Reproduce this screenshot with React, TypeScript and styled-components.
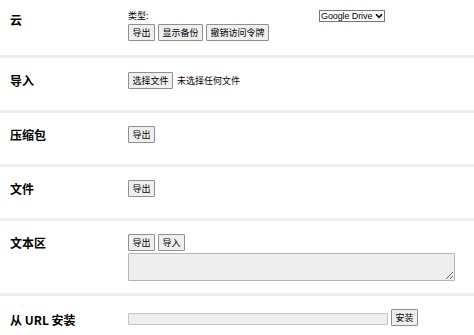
import styled, { createGlobalStyle } from 'styled-components';

const GlobalStyle = createGlobalStyle`
  html, body {
    margin: 0;
    padding: 0;
    background: #fff;
  }
  body {
    font-family: "Liberation Sans", "Noto Sans CJK SC", sans-serif;
    color: #000;
  }
`;

const Page = styled.div`
  width: 474px;
  display: flex;
  flex-direction: column;
`;

const Row = styled.section<{ $h?: number; $top?: number }>`
  display: grid;
  grid-template-columns: 118px 1fr;
  align-items: start;
  height: ${(p) => (p.$h ? `${p.$h}px` : 'auto')};
  padding: ${(p) => p.$top ?? 13}px 10px 0 10px;
  box-sizing: border-box;
  border-bottom: 3px solid #eeeeee;
  &:last-child {
    border-bottom: none;
  }
`;

const Label = styled.div<{ $offset?: number }>`
  font-family: "Noto Sans CJK SC", "Liberation Sans", sans-serif;
  font-weight: bold;
  font-size: 12px;
  line-height: 14px;
  padding-top: ${(p) => p.$offset ?? 2}px;
`;

const Content = styled.div`
  display: flex;
  flex-direction: column;
  gap: 2px;
`;

const Line = styled.div`
  display: flex;
  align-items: center;
  gap: 3px;
`;

const SmallText = styled.span`
  font-family: "Noto Sans CJK SC", "Liberation Sans", sans-serif;
  font-size: 9px;
  line-height: 12px;
`;

const TypeLine = styled.div`
  display: flex;
  align-items: center;
  justify-content: space-between;
  width: 257px;
`;

const SelectWrap = styled.div`
  position: relative;
  display: inline-flex;
`;

const Select = styled.select`
  appearance: none;
  -webkit-appearance: none;
  font-family: "Liberation Sans", Arial, sans-serif;
  font-size: 9px;
  letter-spacing: -0.1px;
  width: 66px;
  height: 12px;
  padding: 0 0 0 1px;
  margin: 0;
  border: 1px solid #777;
  border-radius: 0;
  background: #fff;
  color: #000;
  line-height: 10px;
`;

const Chevron = styled.svg`
  position: absolute;
  right: 2px;
  top: 3px;
  pointer-events: none;
`;

const Button = styled.button`
  font-family: "Noto Sans CJK SC", "Liberation Sans", sans-serif;
  font-size: 9px;
  line-height: 13px;
  height: 17px;
  padding: 0 3.5px;
  margin: 0;
  background: #efefef;
  border: 1px solid #8f8f8f;
  border-radius: 1px;
  color: #000;
  cursor: pointer;
`;

const FileHint = styled.span`
  font-family: "Noto Sans CJK SC", "Liberation Sans", sans-serif;
  font-size: 9px;
  margin-left: 1px;
`;

const TextArea = styled.textarea`
  width: 327px;
  height: 28px;
  margin: 0;
  box-sizing: border-box;
  background: #eeeeee;
  border: 1px solid #b5b5b5;
  border-radius: 1px;
  resize: both;
`;

const UrlInput = styled.input`
  width: 260px;
  height: 12px;
  box-sizing: border-box;
  margin: 4px 0 0 0;
  padding: 0;
  background: #eeeeee;
  border: 1px solid #c4c4c4;
  border-radius: 1px;
  align-self: flex-start;
`;

export default function App() {
  return (
    <Page>
      <GlobalStyle />
      <Row $h={58} $top={10}>
        <Label $offset={3}>云</Label>
        <Content>
          <TypeLine>
            <SmallText>类型:</SmallText>
            <SelectWrap>
              <Select defaultValue="gdrive">
                <option value="gdrive">Google Drive</option>
              </Select>
              <Chevron width="8" height="6" viewBox="0 0 8 6">
                <path d="M1 1.2 L4 4.3 L7 1.2" fill="none" stroke="#000" strokeWidth="1.6" />
              </Chevron>
            </SelectWrap>
          </TypeLine>
          <Line>
            <Button>导出</Button>
            <Button>显示备份</Button>
            <Button>撤销访问令牌</Button>
          </Line>
        </Content>
      </Row>
      <Row $h={55} $top={14}>
        <Label>导入</Label>
        <Line>
          <Button>选择文件</Button>
          <FileHint>未选择任何文件</FileHint>
        </Line>
      </Row>
      <Row $h={54}>
        <Label>压缩包</Label>
        <Line>
          <Button>导出</Button>
        </Line>
      </Row>
      <Row $h={54}>
        <Label>文件</Label>
        <Line>
          <Button>导出</Button>
        </Line>
      </Row>
      <Row $h={75}>
        <Label>文本区</Label>
        <Content>
          <Line>
            <Button>导出</Button>
            <Button>导入</Button>
          </Line>
          <TextArea />
        </Content>
      </Row>
      <Row>
        <Label $offset={4}>从 URL 安装</Label>
        <Line>
          <UrlInput type="text" />
          <Button>安装</Button>
        </Line>
      </Row>
    </Page>
  );
}
